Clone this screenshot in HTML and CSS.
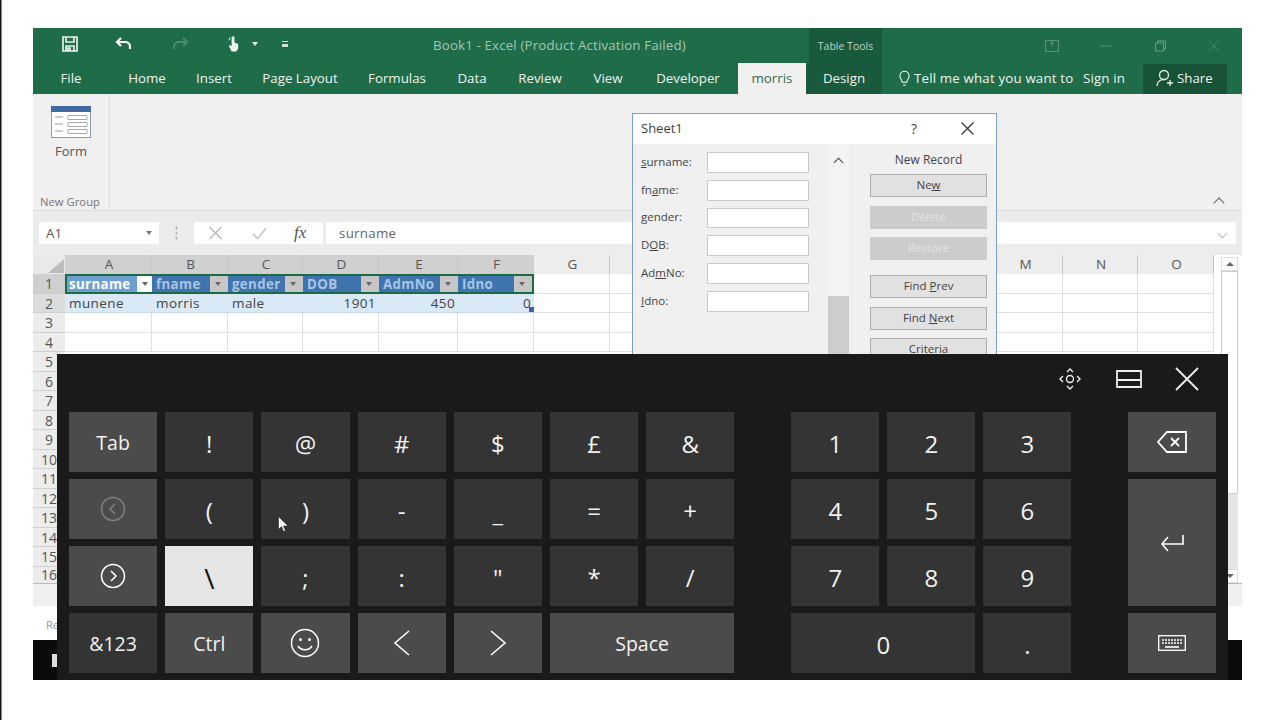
FILE: index.html
```html
<!DOCTYPE html>
<html lang="en">
<head>
<meta charset="utf-8">
<title>Book1 - Excel</title>
<link rel="stylesheet" href="styles.css">
</head>
<body>
<div class="window">
  <header class="titlebar">
    <div class="qat">
      <svg class="qi save" viewBox="0 0 16 16"><path d="M1 1h14v14H1z M4 1v5h8V1 M4 15v-5h8v5 M6 12h2v3H6z" fill="none" stroke="#e8f2ec" stroke-width="1.700"/></svg>
      <svg class="qi undo" viewBox="0 0 18 16"><path d="M6 2 2 6l4 4M2 6h9a4.500 4.500 0 0 1 4 5v2" fill="none" stroke="#fff" stroke-width="2.200"/></svg>
      <svg class="qi redo" viewBox="0 0 18 16"><path d="M12 2l4 4-4 4M16 6H7a4.500 4.500 0 0 0-4 5v2" fill="none" stroke="#4c8a6c" stroke-width="2"/></svg>
      <svg class="qi touch" viewBox="0 0 16 18"><path d="M6 1.500a2 2 0 0 1 3 0v6l4 1.500v5l-2 3H6L3 11l1-1 2 1.500z" fill="#eef5f1"/><path d="M3.500 5a3.500 3.500 0 0 1 1-3" fill="none" stroke="#fff"/></svg>
      <span class="caret white"></span>
      <span class="qcustom"></span>
    </div>
    <div class="doc-title">Book1 - Excel (Product Activation Failed)</div>
    <div class="table-tools">Table Tools</div>
    <div class="winctl">
      <svg viewBox="0 0 14 12"><path d="M.5.5h13v11H.5zM7 .5v6M5 3h4" fill="none" stroke="#5c947a"/></svg>
      <svg viewBox="0 0 14 12"><path d="M1 6h12" stroke="#4c8a6c"/></svg>
      <svg viewBox="0 0 14 12"><path d="M2.500 3h8v8h-8zM4.500 3V1h8v8h-2" fill="none" stroke="#6ca088"/></svg>
      <svg viewBox="0 0 14 12"><path d="M2 .5l10 11M12 .5l-10 11" stroke="#4c8a6c"/></svg>
    </div>
  </header>
  <nav class="tabs">
    <div class="tablist">
      <span>File</span><span>Home</span><span>Insert</span><span>Page Layout</span><span>Formulas</span><span>Data</span><span>Review</span><span>View</span><span class="dev">Developer</span><span class="active">morris</span><span class="design">Design</span>
    </div>
    <div class="tell">
      <svg class="bulb" viewBox="0 0 12 18"><path d="M3.500 13C3 10 1 9 1 6a5 5 0 0 1 10 0c0 3-2 4-2.500 7zM4.500 16h3" fill="none" stroke="#fff" stroke-width="1.100"/></svg>
      <span>Tell me what you want to</span>
    </div>
    <span class="signin">Sign in</span>
    <div class="share">
      <svg class="person" viewBox="0 0 18 18"><circle cx="8" cy="6" r="4.500" fill="none" stroke="#e6f0ea" stroke-width="1.300"/><path d="M1 17c0-4 3-6.500 7-6.500M11 14h6M14 11v6" fill="none" stroke="#e6f0ea" stroke-width="1.300"/></svg>
      <span>Share</span>
    </div>
  </nav>
  <section class="ribbon">
    <div class="group">
      <div class="form-btn">
        <svg class="form-icon" viewBox="0 0 40 32"><rect x=".5" y=".5" width="39" height="31" fill="#fff" stroke="#8a9ab0"/><rect width="40" height="6" fill="#41699f"/><path d="M4 11h8M4 18h8M4 25h8" stroke="#999"/><path d="M17 9.500h19v4H17zM17 16.500h19v4H17zM17 23.500h19v4H17z" fill="none" stroke="#aaa"/></svg>
        <span>Form</span>
      </div>
      <div class="group-name">New Group</div>
    </div>
    <span class="collapse"></span>
  </section>
  <section class="formula">
    <div class="namebox"><span>A1</span><span class="caret"></span></div>
    <div class="dots"></div>
    <div class="fxbox">
      <svg class="fi" viewBox="0 0 14 14"><path d="M1 1l12 12M13 1L1 13" stroke="#bbb" stroke-width="1.500"/></svg>
      <svg class="fi" viewBox="0 0 16 14"><path d="M1 8l5 5L15 2" fill="none" stroke="#c4c4c4" stroke-width="1.700"/></svg>
      <i class="fx">fx</i>
    </div>
    <div class="fbar"><span>surname</span><span class="fchev"></span></div>
  </section>
  <section class="sheetwrap">
    <div class="sheet">
      <div class="corner"><span></span></div>
      <div class="ch on wa">A</div><div class="ch on">B</div><div class="ch on">C</div><div class="ch on">D</div><div class="ch on">E</div><div class="ch on">F</div><div class="ch">G</div><div class="ch">H</div><div class="ch">I</div><div class="ch">J</div><div class="ch">K</div><div class="ch">L</div><div class="ch">M</div><div class="ch">N</div><div class="ch">O</div>

      <div class="rh on">1</div>
      <div class="th sel"><b>surname</b><span class="fb"></span></div><div class="th"><b>fname</b><span class="fb"></span></div><div class="th"><b>gender</b><span class="fb"></span></div><div class="th"><b>DOB</b><span class="fb"></span></div><div class="th"><b>AdmNo</b><span class="fb"></span></div><div class="th lastcol"><b>Idno</b><span class="fb"></span></div>
      <div class="c"></div><div class="c"></div><div class="c"></div><div class="c"></div><div class="c"></div><div class="c"></div><div class="c"></div><div class="c"></div><div class="c"></div>

      <div class="rh on2">2</div>
      <div class="td">munene</div><div class="td">morris</div><div class="td">male</div><div class="td num">1901</div><div class="td num">450</div><div class="td num last">0</div>
      <div class="c"></div><div class="c"></div><div class="c"></div><div class="c"></div><div class="c"></div><div class="c"></div><div class="c"></div><div class="c"></div><div class="c"></div>

      <div class="rh">3</div><div class="c"></div><div class="c"></div><div class="c"></div><div class="c"></div><div class="c"></div><div class="c"></div><div class="c"></div><div class="c"></div><div class="c"></div><div class="c"></div><div class="c"></div><div class="c"></div><div class="c"></div><div class="c"></div><div class="c"></div>
      <div class="rh">4</div><div class="c"></div><div class="c"></div><div class="c"></div><div class="c"></div><div class="c"></div><div class="c"></div><div class="c"></div><div class="c"></div><div class="c"></div><div class="c"></div><div class="c"></div><div class="c"></div><div class="c"></div><div class="c"></div><div class="c"></div>
      <div class="rh">5</div><div class="blank"></div>
      <div class="rh">6</div><div class="blank"></div>
      <div class="rh">7</div><div class="blank"></div>
      <div class="rh">8</div><div class="blank"></div>
      <div class="rh">9</div><div class="blank"></div>
      <div class="rh">10</div><div class="blank"></div>
      <div class="rh">11</div><div class="blank"></div>
      <div class="rh">12</div><div class="blank"></div>
      <div class="rh">13</div><div class="blank"></div>
      <div class="rh">14</div><div class="blank"></div>
      <div class="rh">15</div><div class="blank"></div>
      <div class="rh end">16</div><div class="blank"></div>
    </div>
    <div class="vscroll">
      <div class="vbtn"><span class="up"></span></div>
      <div class="vthumb"></div>
      <div class="vtrack"></div>
      <div class="vbtn"><span class="down"></span></div>
    </div>
  </section>
  <div class="hscroll"></div>
  <footer class="status">Re</footer>
  <div class="taskbar"><span class="win"></span></div>
</div>

<div class="dialog">
  <div class="dlg-title"><span>Sheet1</span><span class="help">?</span>
    <svg class="dlg-x" viewBox="0 0 12 12"><path d="M.5.5l11 11M11.500.5l-11 11" stroke="#333" stroke-width="1.100"/></svg>
  </div>
  <div class="dlg-body">
    <div class="fields">
      <label><span><u>s</u>urname:</span><span class="input"></span></label>
      <label><span>fn<u>a</u>me:</span><span class="input"></span></label>
      <label><span><u>g</u>ender:</span><span class="input"></span></label>
      <label><span>D<u>O</u>B:</span><span class="input"></span></label>
      <label><span>Ad<u>m</u>No:</span><span class="input"></span></label>
      <label><span><u>I</u>dno:</span><span class="input"></span></label>
    </div>
    <div class="dscroll"><span class="dchev"></span><span class="dthumb"></span></div>
    <div class="dbtns">
      <div class="rec">New Record</div>
      <div class="dbtn">Ne<u>w</u></div>
      <div class="dbtn off">Delete</div>
      <div class="dbtn off">Restore</div>
      <div class="dbtn find">Find <u>P</u>rev</div>
      <div class="dbtn">Find <u>N</u>ext</div>
      <div class="dbtn"><u>C</u>riteria</div>
    </div>
  </div>
</div>

<div class="keyboard">
  <div class="kb-top">
    <svg class="move" viewBox="0 0 22 22"><circle cx="11" cy="11" r="3.500" fill="none" stroke="#eee" stroke-width="1.400"/><path d="M4 8l-3 3 3 3M18 8l3 3-3 3M8 4l3-3 3 3M8 18l3 3 3-3" fill="none" stroke="#eee" stroke-width="1.400"/></svg>
    <svg class="dock" viewBox="0 0 26 18"><path d="M1 1h24v16H1zM1 10h24" fill="none" stroke="#eee" stroke-width="1.800"/></svg>
    <svg class="kclose" viewBox="0 0 24 24"><path d="M1 1l22 22M23 1L1 23" stroke="#eee" stroke-width="1.800"/></svg>
  </div>
  <div class="keys">
    <div class="k l t20">Tab</div><div class="k">!</div><div class="k">@</div><div class="k">#</div><div class="k">$</div><div class="k">£</div><div class="k">&amp;</div>
    <div class="gap"></div><div class="k">1</div><div class="k">2</div><div class="k">3</div><div class="gap"></div>
    <div class="k l"><svg class="kicon" viewBox="0 0 26 26"><circle cx="13" cy="13" r="11.500" fill="none" stroke="#808080" stroke-width="1.500"/><path d="M15 8l-5 5 5 5" fill="none" stroke="#808080" stroke-width="1.500"/></svg></div>

    <div class="k">(</div><div class="k">)</div><div class="k">-</div><div class="k low">_</div><div class="k">=</div><div class="k">+</div>
    <div class="gap"></div><div class="k">4</div><div class="k">5</div><div class="k">6</div><div class="gap"></div>
    <div class="k l"><svg class="kicon" viewBox="0 0 26 26"><circle cx="13" cy="13" r="11.500" fill="none" stroke="#fff" stroke-width="1.500"/><path d="M11 8l5 5-5 5" fill="none" stroke="#fff" stroke-width="1.500"/></svg></div>
    <div class="k press">\</div><div class="k">;</div><div class="k">:</div><div class="k">"</div><div class="k">*</div><div class="k">/</div>
    <div class="gap"></div><div class="k">7</div><div class="k">8</div><div class="k">9</div><div class="gap"></div>

    <div class="k dark t20">&amp;123</div><div class="k l t20">Ctrl</div>
    <div class="k l"><svg class="kicon smile" viewBox="0 0 30 30"><circle cx="15" cy="15" r="13.500" fill="none" stroke="#fff" stroke-width="1.500"/><circle cx="10.500" cy="11.500" r="1.500" fill="#fff"/><circle cx="19.500" cy="11.500" r="1.500" fill="#fff"/><path d="M8 18c3 5 11 5 14 0" fill="none" stroke="#fff" stroke-width="1.500"/></svg></div>
    <div class="k l"><svg class="kicon arrow" viewBox="0 0 18 26"><path d="M16 1L2 13l14 12" fill="none" stroke="#fff" stroke-width="1.600"/></svg></div>
    <div class="k l"><svg class="kicon arrow" viewBox="0 0 18 26"><path d="M2 1l14 12L2 25" fill="none" stroke="#fff" stroke-width="1.600"/></svg></div>
    <div class="k l t20 space">Space</div>
    <div class="gap"></div><div class="k zero">0</div><div class="k">.</div><div class="gap"></div>
    <div class="k l"><svg class="kicon kb" viewBox="0 0 28 16"><rect x=".7" y=".7" width="26.600" height="14.600" fill="none" stroke="#fff" stroke-width="1.300"/><path d="M4 5h20M4 8h20" stroke="#fff" stroke-width="1.600" stroke-dasharray="2 1"/><path d="M7 12h14" stroke="#fff" stroke-width="1.600"/></svg></div>

    <div class="k l bs"><svg class="kicon back" viewBox="0 0 30 22"><path d="M10 1h19v20H10L1 11zM14 7l8 8M22 7l-8 8" fill="none" stroke="#fff" stroke-width="1.800"/></svg></div>
    <div class="k l enter"><svg class="kicon ret" viewBox="0 0 24 18"><path d="M23 1v9H2M8 3l-6 7 6 7" fill="none" stroke="#fff" stroke-width="1.600"/></svg></div>
  </div>
</div>

<svg class="cursor" viewBox="0 0 11 16"><path d="M.5.500v13l3-3 2 5 2-1-2-4.500h4.500z" fill="#fff" stroke="#222" stroke-width=".6"/></svg>
</body>
</html>
```
FILE: styles.css
```css
* { box-sizing: border-box; }
html, body { margin: 0; height: 720px; overflow: hidden; background: #fff; }
body { font-family: "Open Sans", "Noto Sans", sans-serif; color: #444; position: relative; box-shadow: inset 1.500px 0 0 #111; }
.window { width: 1209px; height: 652px; margin: 28px 0 0 33px; display: flex; flex-direction: column; background: #fff; }

/* title bar */
.titlebar { height: 36px; background: #1e6c48; display: flex; align-items: center; position: relative; flex: none; }
.qat { display: flex; align-items: center; padding: 0 0 4px 29px; }
.qi { display: block; }
.save { width: 16px; height: 16px; }
.undo { width: 18px; height: 16px; margin-left: 37px; }
.redo { width: 18px; height: 16px; margin-left: 38px; }
.touch { width: 15px; height: 18px; margin-left: 37px; }
.caret { display: inline-block; width: 0; height: 0; border: 3.500px solid transparent; border-top: 4px solid #777; border-bottom: 0; }
.caret.white { border-top-color: #eef5f1; margin-left: 11px; }
.qcustom { width: 6px; height: 6px; margin-left: 24px; border-top: 1px solid #cfe0d7; border-bottom: 3px solid #cfe0d7; }
.doc-title { position: absolute; left: 400px; top: 8px; font-size: 13.300px; letter-spacing: .15px; color: #a7c4b5; white-space: nowrap; }
.table-tools { position: absolute; left: 776px; top: 0; width: 73px; height: 66px; background: #1a5a3c; color: #bcd3c7; font-size: 10.500px; text-align: center; padding-top: 11px; }
.winctl { margin-left: auto; display: flex; gap: 40px; padding-right: 21px; }
.winctl svg { width: 14px; height: 12px; display: block; }

/* tabs */
.tabs { height: 30px; background: #1e6c48; display: flex; flex: none; position: relative; color: #eef4f0; font-size: 13.300px; }
.tablist { display: grid; grid-template-columns: 76px 76px 58px 114px 80px 70px 66px 70px 95px 68px 76px; position: relative; }
.tablist span { display: flex; align-items: center; justify-content: center; padding-bottom: 2px; white-space: nowrap; }
.tablist .dev { padding-right: 5px; }
.tablist .active { background: #f0f0f0; color: #2f6b4e; margin-top: -1px; height: 31px; }
.tablist .design { background: #1a5a3c; }
.tell { display: flex; align-items: center; gap: 4px; margin-left: 17px; white-space: nowrap; width: 184px; padding-bottom: 2px; letter-spacing: .17px; }
.bulb { width: 11px; height: 17px; }
.signin { align-self: center; white-space: nowrap; width: 60px; padding-bottom: 2px; letter-spacing: .15px; }
.share { width: 84px; background: #185237; display: flex; align-items: center; gap: 3px; padding: 0 0 2px 13px; }
.person { width: 18px; height: 18px; }

/* ribbon */
.ribbon { height: 116px; background: #f0f0f0; position: relative; flex: none; display: flex; }
.group { width: 77px; height: 114px; margin-top: 1px; border-right: 1px solid #e0e0e0; display: flex; flex-direction: column; align-items: center; }
.form-btn { display: flex; flex-direction: column; align-items: center; padding-top: 11px; font-size: 13px; color: #555; }
.form-icon { width: 40px; height: 32px; margin-bottom: 4px; }
.group-name { margin-top: auto; font-size: 11.300px; color: #777; line-height: 15px; align-self: flex-start; padding: 0 0 0 7px; white-space: nowrap; }
.collapse { position: absolute; right: 19px; top: 105px; width: 8px; height: 8px; border: solid #666; border-width: 1.500px 0 0 1.500px; transform: rotate(45deg); }

/* formula bar */
.formula { height: 45px; background: #ececec; border-top: 1px solid #dcdcdc; display: flex; padding: 11px 6px 11px; flex: none; font-size: 13.300px; }
.namebox { width: 120px; background: #fff; display: flex; align-items: center; justify-content: space-between; padding: 0 7px; color: #555; }
.dots { width: 35px; background: radial-gradient(circle, #b5b5b5 1px, transparent 1.200px) center / 3px 5px repeat-y; margin: 4px 0; }
.fxbox { width: 129px; background: #fff; display: flex; align-items: center; gap: 29px; padding-left: 14px; }
.fi { width: 15px; height: 14px; }
.fx { font-family: "Liberation Serif", serif; font-size: 17px; color: #555; margin-left: -2px; }
.fbar { flex: 1; margin-left: 3px; background: #fff; display: flex; align-items: center; justify-content: space-between; padding: 0 10px 0 13px; color: #666; letter-spacing: .3px; }
.fchev { width: 7px; height: 7px; border: solid #bbb; border-width: 0 1.500px 1.500px 0; transform: rotate(45deg); }

/* sheet */
.sheetwrap { height: 328px; display: flex; flex: none; background: #fff; overflow: hidden; }
.sheet { display: grid; grid-template-columns: 32px 87px 76px 75px 76px 79px 76px 76px 76px 76px 75px 75px 75px 76px 75px 76px; grid-template-rows: 19px repeat(15, 19.500px) 16.500px; width: 1181px; align-content: start; flex: none; }
.corner { background: #e9e9e9; position: relative; }
.corner span { position: absolute; right: 1px; bottom: 1px; width: 0; height: 0; border-style: solid; border-width: 0 0 14px 16px; border-color: transparent transparent #bdbdbd transparent; }
.ch { background: #ededed; border-right: 1px solid #c8c8c8; text-align: center; font-size: 13.500px; line-height: 19px; color: #555; padding-left: 2px; }
.ch.on { background: #d0d0d0; }
.rh { background: #ececec; border-bottom: 1px solid #cfcfcf; text-align: center; font-size: 14px; line-height: 19px; color: #555; white-space: nowrap; }
.rh.end { line-height: 15px; border-bottom: 0; }
.rh.on { background: #cfcfcf; }
.rh.on2 { background: #dcdcdc; }
.c { border-right: 1px solid #dfdfdf; border-bottom: 1px solid #dfdfdf; }
.blank { grid-column: 2 / -1; }
.th { background: #3f74ae; display: flex; justify-content: space-between; align-items: stretch; padding-left: 4px; border-top: 2px solid #1d6b46; border-bottom: 2px solid #1d6b46; font-size: 13.300px; line-height: 16px; min-width: 0; overflow: hidden; }
.th b { color: #a9c5e2; letter-spacing: .35px; }
.th.sel { border-left: 2px solid #1d6b46; background: #6d9fd0; padding-left: 2px; }
.th.sel b { color: #fff; }
.th.lastcol { border-right: 2px solid #1d6b46; }
.fb { width: 18px; flex: none; background: #c6c6c6; position: relative; }
.fb::after { content: ""; position: absolute; left: 5px; top: 6px; border: 3.500px solid transparent; border-top: 4px solid #666; border-bottom: 0; }
.th.sel .fb { background: #fff; width: 15px; }
.td { background: #d9e9f6; font-size: 13.500px; line-height: 19px; padding: 0 3px 0 4px; color: #444; letter-spacing: .4px; border-bottom: 1px solid #c6d9ea; }
.td.num { text-align: right; }
.td.last { position: relative; }
.td.last::after { content: ""; position: absolute; right: 0; bottom: 0; width: 5px; height: 5px; background: #3a5fb0; }
.vscroll { width: 17px; margin-left: 7px; display: flex; flex-direction: column; padding-top: 2px; flex: none; }
.vbtn { height: 14px; background: #fff; border: 1px solid #ddd; display: flex; align-items: center; justify-content: center; flex: none; }
.up { border: 4px solid transparent; border-bottom: 4px solid #666; border-top: 0; }
.down { border: 4px solid transparent; border-top: 4px solid #666; border-bottom: 0; }
.vthumb { height: 223px; background: #fff; border: 1px solid #cfcfcf; flex: none; }
.vtrack { height: 75px; background: #e6e6e6; flex: none; }
.hscroll { height: 23px; background: #f0f0f0; flex: none; border-top: 1px solid #bbb; }
.status { height: 34px; background: #fff; flex: none; font-size: 11px; color: #999; padding: 11px 0 0 13px; }
.taskbar { height: 40px; background: #0b0b0b; flex: none; padding: 14px 0 0 19px; }
.win { display: block; width: 10px; height: 13px; background: #ddd; }

/* dialog */
.dialog { position: absolute; left: 632px; top: 113px; width: 365px; height: 250px; background: #f0f0f0; border: 1px solid #7ba3c9; font-family: "Open Sans", sans-serif; font-size: 11.500px; color: #444; }
.dlg-title { height: 30px; background: #fff; display: flex; align-items: center; padding: 0 22px 2px 8px; font-size: 13px; color: #444; }
.help { margin-left: auto; margin-right: 44px; font-size: 14px; }
.dlg-x { width: 13px; height: 13px; }
.dlg-body { display: flex; }
.fields { width: 176px; padding: 8px 0 0 8px; display: flex; flex-direction: column; gap: 7px; }
.fields label { display: flex; align-items: center; justify-content: space-between; height: 20.800px; }
.fields label > span:first-child { margin-top: -2px; }
.input { width: 102px; height: 20.800px; background: #fff; border: 1px solid #c9c9c9; }
.fields u { text-underline-offset: 1px; }
.dscroll { width: 21px; margin-left: 19px; height: 220px; background: #f3f3f3; position: relative; }
.dchev { position: absolute; left: 7px; top: 15px; width: 7px; height: 7px; border: solid #444; border-width: 1.500px 0 0 1.500px; transform: rotate(45deg); }
.dthumb { position: absolute; left: 0; top: 152px; width: 21px; height: 70px; background: #cdcdcd; }
.dbtns { width: 117px; margin-left: 21px; display: flex; flex-direction: column; }
.rec { text-align: center; height: 30px; padding-top: 8px; line-height: 16px; font-size: 12px; }
.dbtn { height: 23px; margin-bottom: 8.500px; background: #e1e1e1; border: 1px solid #adadad; text-align: center; line-height: 20px; }
.dbtn.off { background: #cccccc; border-color: #cccccc; color: #e4e4e4; }
.dbtn.find { margin-top: 6.500px; }

/* keyboard */
.keyboard { position: absolute; left: 57px; top: 354px; width: 1171px; height: 326px; background: #1a1a1a; color: #f2f2f2; }
.kb-top { height: 58px; display: flex; align-items: center; justify-content: flex-end; padding: 0 29px 8px 0; }
.move { width: 22px; height: 22px; margin-right: 35px; }
.dock { width: 26px; height: 18px; margin-right: 33px; }
.kclose { width: 24px; height: 24px; }
.keys { display: grid; margin-left: 12px; grid-template-columns: repeat(7, 88.200px) 41px repeat(3, 88px) 41px 88px; grid-template-rows: repeat(4, 60px); gap: 7px 8px; width: 1148px; }
.k { background: #343434; display: flex; align-items: center; justify-content: center; font-size: 24px; line-height: 1; color: #f2f2f2; padding-top: 3px; }
.k.l { background: #4b4b4b; padding-top: 0; }
.k.dark { background: #343434; }
.k.press { background: #e6e6e6; color: #111; font-size: 28px; }
.k.t20 { font-size: 19.500px; padding-top: 2px; }
.k.space { grid-column: span 2; }
.k.zero { grid-column: span 2; }
.k.low { padding-top: 8px; }
.k.bs { grid-column: 13; grid-row: 1; }
.k.enter { grid-column: 13; grid-row: 2 / span 2; }
.kicon { width: 26px; height: 26px; }
.smile { width: 30px; height: 30px; }
.arrow { width: 18px; height: 28px; }
.kb { width: 28px; height: 16px; }
.back { width: 30px; height: 22px; }
.ret { width: 24px; height: 18px; }
.cursor { position: absolute; left: 278px; top: 516px; width: 11px; height: 16px; }
```
